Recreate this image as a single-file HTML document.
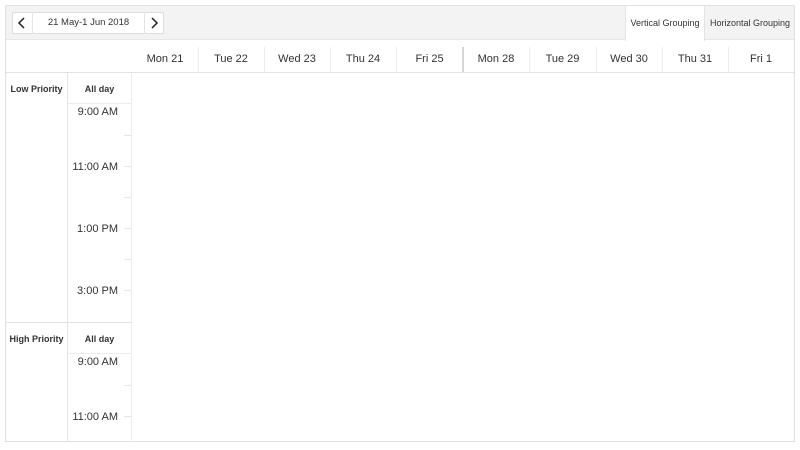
<!DOCTYPE html><html><head><style>
body{margin:0;width:800px;height:450px;background:#fff;font-family:"Segoe UI","Liberation Sans",sans-serif;color:#333;position:relative;overflow:hidden}
div{position:absolute;box-sizing:border-box}
.t{font-size:11px;white-space:nowrap}
.b{font-weight:bold;font-size:9px}
</style></head><body>
<div style="left:5px;top:5px;width:790px;height:437px;border:1px solid #e0e0e0"></div>
<div style="left:6px;top:6px;width:788px;height:34px;background:#f3f3f3;border-bottom:1px solid #e6e6e6"></div>
<div style="left:12px;top:12px;width:152px;height:22px;background:#fff;border:1px solid #ddd;border-radius:2px"></div>
<div style="left:32px;top:12px;width:1px;height:22px;background:#e3e3e3"></div>
<div style="left:144px;top:12px;width:1px;height:22px;background:#e3e3e3"></div>
<svg style="position:absolute;left:16px;top:16px" width="12" height="14"><path d="M8 2L3 7L8 12" stroke="#222" stroke-width="1.5" fill="none"/></svg>
<svg style="position:absolute;left:148px;top:16px" width="12" height="14"><path d="M4 2L9 7L4 12" stroke="#222" stroke-width="1.5" fill="none"/></svg>
<div class="t" style="left:33px;top:17px;width:111px;text-align:center;font-size:9.5px">21 May-1 Jun 2018</div>
<div style="left:625px;top:6px;width:80px;height:35px;background:#fff;border-left:1px solid #e3e3e3;border-right:1px solid #e3e3e3"></div>
<div class="t" style="left:625px;top:18px;width:80px;text-align:center;font-size:9px">Vertical Grouping</div>
<div class="t" style="left:705px;top:18px;width:90px;text-align:center;font-size:9px">Horizontal Grouping</div>
<div style="left:6px;top:72px;width:788px;height:1px;background:#e3e3e3"></div>
<div class="t" style="left:132px;top:53px;width:66px;text-align:center">Mon 21</div>
<div class="t" style="left:198px;top:53px;width:66px;text-align:center">Tue 22</div>
<div class="t" style="left:264px;top:53px;width:66px;text-align:center">Wed 23</div>
<div class="t" style="left:330px;top:53px;width:66px;text-align:center">Thu 24</div>
<div class="t" style="left:396px;top:53px;width:67px;text-align:center">Fri 25</div>
<div class="t" style="left:463px;top:53px;width:66px;text-align:center">Mon 28</div>
<div class="t" style="left:529px;top:53px;width:67px;text-align:center">Tue 29</div>
<div class="t" style="left:596px;top:53px;width:66px;text-align:center">Wed 30</div>
<div class="t" style="left:662px;top:53px;width:66px;text-align:center">Thu 31</div>
<div class="t" style="left:728px;top:53px;width:66px;text-align:center">Fri 1</div>
<div style="left:198px;top:47px;width:1px;height:25px;background:#ececec"></div>
<div style="left:264px;top:47px;width:1px;height:25px;background:#ececec"></div>
<div style="left:330px;top:47px;width:1px;height:25px;background:#ececec"></div>
<div style="left:396px;top:47px;width:1px;height:25px;background:#ececec"></div>
<div style="left:462px;top:47px;width:2px;height:25px;background:#d6d6d6"></div>
<div style="left:529px;top:47px;width:1px;height:25px;background:#ececec"></div>
<div style="left:596px;top:47px;width:1px;height:25px;background:#ececec"></div>
<div style="left:662px;top:47px;width:1px;height:25px;background:#ececec"></div>
<div style="left:728px;top:47px;width:1px;height:25px;background:#ececec"></div>
<div style="left:67px;top:72px;width:1px;height:370px;background:#e3e3e3"></div>
<div style="left:131px;top:72px;width:1px;height:370px;background:#ececec"></div>
<div style="left:6px;top:322px;width:126px;height:1px;background:#e3e3e3"></div>
<div style="left:68px;top:103px;width:63px;height:1px;background:#ececec"></div>
<div style="left:68px;top:353px;width:63px;height:1px;background:#ececec"></div>
<div class="t b" style="left:6px;top:84px;width:61px;text-align:center">Low Priority</div>
<div class="t b" style="left:6px;top:334px;width:61px;text-align:center">High Priority</div>
<div class="t b" style="left:68px;top:84px;width:63px;text-align:center">All day</div>
<div class="t b" style="left:68px;top:334px;width:63px;text-align:center">All day</div>
<div class="t" style="left:68px;top:106px;width:50px;text-align:right">9:00 AM</div>
<div class="t" style="left:68px;top:161px;width:50px;text-align:right">11:00 AM</div>
<div class="t" style="left:68px;top:223px;width:50px;text-align:right">1:00 PM</div>
<div class="t" style="left:68px;top:285px;width:50px;text-align:right">3:00 PM</div>
<div class="t" style="left:68px;top:356px;width:50px;text-align:right">9:00 AM</div>
<div class="t" style="left:68px;top:411px;width:50px;text-align:right">11:00 AM</div>
<div style="left:124px;top:135px;width:7px;height:1px;background:#e6e6e6"></div>
<div style="left:124px;top:166px;width:7px;height:1px;background:#e6e6e6"></div>
<div style="left:124px;top:197px;width:7px;height:1px;background:#e6e6e6"></div>
<div style="left:124px;top:228px;width:7px;height:1px;background:#e6e6e6"></div>
<div style="left:124px;top:259px;width:7px;height:1px;background:#e6e6e6"></div>
<div style="left:124px;top:290px;width:7px;height:1px;background:#e6e6e6"></div>
<div style="left:124px;top:385px;width:7px;height:1px;background:#e6e6e6"></div>
<div style="left:124px;top:416px;width:7px;height:1px;background:#e6e6e6"></div>
</body></html>
